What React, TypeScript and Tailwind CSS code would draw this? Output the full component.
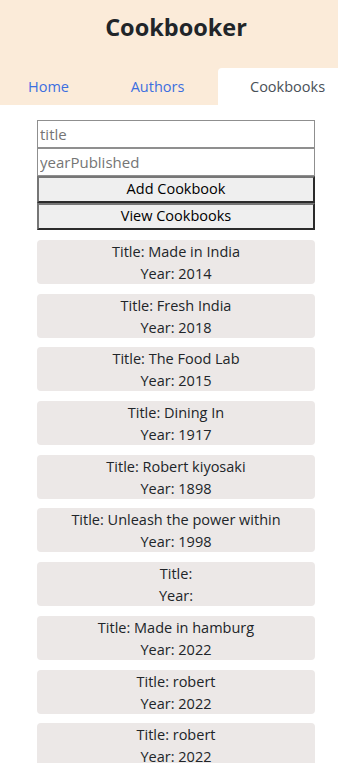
import React from 'react';

const cookbooks = [
  { title: 'Made in India', year: '2014' },
  { title: 'Fresh India', year: '2018' },
  { title: 'The Food Lab', year: '2015' },
  { title: 'Dining In', year: '1917' },
  { title: 'Robert kiyosaki', year: '1898' },
  { title: 'Unleash the power within', year: '1998' },
  { title: '', year: '' },
  { title: 'Made in hamburg', year: '2022' },
  { title: 'robert', year: '2022' },
  { title: 'robert', year: '2022' },
];

const App: React.FC = () => {
  return (
    <div className="min-h-screen bg-white text-[#212529]" style={{ fontFamily: '"Open Sans", "Noto Sans", sans-serif' }}>
      <header className="bg-[#fbebd9]">
        <h1 className="h-[68px] pl-[14px] pt-[11px] text-center text-[23.5px] font-bold leading-[32px] text-[#212529]">Cookbooker</h1>
        <nav className="flex h-[37px] items-stretch text-[14.5px]">
          <a className="flex w-[97px] items-center justify-center text-[#3b6fe0]">Home</a>
          <a className="flex w-[121px] items-center justify-center text-[#3b6fe0]">Authors</a>
          <a className="flex flex-1 items-center rounded-tl-[4px] bg-white pl-[32px] text-[#495057]">Cookbooks</a>
        </nav>
      </header>

      <main className="ml-[37px] flex w-[278px] flex-col pt-[15px]">
        <input
          placeholder="title"
          className="h-[28px] w-full border border-[#8f8f8f] px-[2px] text-[15px] placeholder:text-[#757575]"
        />
        <input
          placeholder="yearPublished"
          className="h-[28px] w-full border border-[#8f8f8f] px-[2px] text-[15px] placeholder:text-[#757575]"
        />
        <button className="h-[27px] w-full border-2 border-t-[#767676] border-l-[#767676] border-r-[#2b2b2b] border-b-[#2b2b2b] bg-[#efefef] text-[14.5px] leading-none text-black">
          Add Cookbook
        </button>
        <button className="h-[27px] w-full border-2 border-t-[#767676] border-l-[#767676] border-r-[#2b2b2b] border-b-[#2b2b2b] bg-[#efefef] text-[14.5px] leading-none text-black">
          View Cookbooks
        </button>

        <ul className="mt-[10px] flex flex-col gap-[9.7px]">
          {cookbooks.map((c, i) => (
            <li key={i} className="flex h-[44px] flex-col justify-center rounded-[4px] bg-[#ece8e7] pt-[2px] text-center text-[14.5px] leading-[22px] text-[#212529]">
              <span>Title: {c.title}</span>
              <span>Year: {c.year}</span>
            </li>
          ))}
        </ul>
      </main>
    </div>
  );
};

export default App;
